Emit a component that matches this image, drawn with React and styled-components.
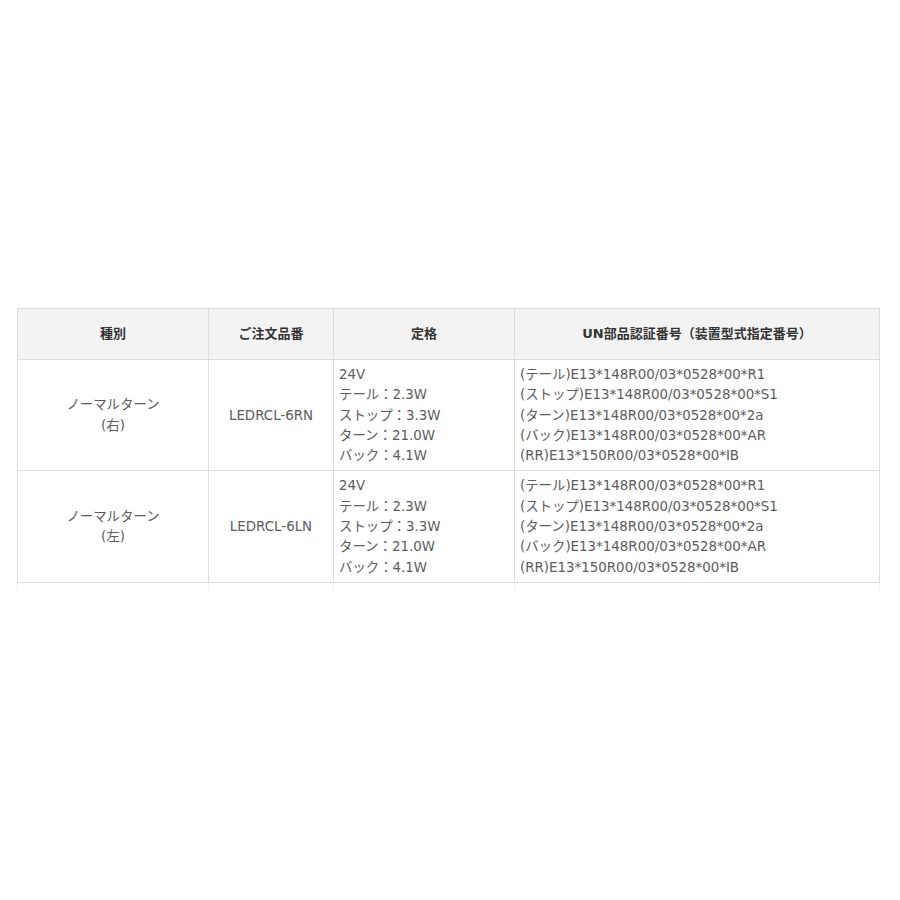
import React from 'react';
import styled, { createGlobalStyle } from 'styled-components';

const Global = createGlobalStyle`
  html, body {
    margin: 0;
    padding: 0;
    background: #fff;
  }
  body {
    font-family: "DejaVu Sans", "Noto Sans CJK JP", sans-serif;
  }
`;

const Page = styled.div`
  width: 900px;
  height: 900px;
  padding: 308px 0 0 17px;
  box-sizing: border-box;
`;

const Table = styled.table`
  width: 862px;
  border-collapse: collapse;
  table-layout: fixed;
  color: #5c5c5c;
  font-size: 13.4px;
  line-height: 20.3px;

  th, td {
    border: 1px solid #ddd;
  }
  thead > tr > th {
    background: #f3f3f3;
    color: #333;
    font-weight: bold;
    font-size: 13px;
    height: 50px;
    padding: 0 5px;
    text-align: center;
  }
  tbody > tr > td {
    padding: 5px 5px 4px;
    vertical-align: middle;
  }
`;

const Col = styled.col`
  width: ${p => p.$w}px;
`;

const Center = styled.td`
  text-align: center;
`;

const Left = styled.td`
  text-align: left;
  white-space: nowrap;
`;

const Tail = styled.tr`
  td {
    height: 7px;
    padding: 0 !important;
    border-top: 1px solid #ddd;
    border-bottom: none;
    border-left: 1px solid #f0f0f0;
    border-right: 1px solid #f0f0f0;
  }
`;

const rows = [
  { kind: 'ノーマルターン', side: '(右)', code: 'LEDRCL-6RN' },
  { kind: 'ノーマルターン', side: '(左)', code: 'LEDRCL-6LN' },
];

const rating = ['24V', 'テール：2.3W', 'ストップ：3.3W', 'ターン：21.0W', 'バック：4.1W'];
const approvals = [
  '(テール)E13*148R00/03*0528*00*R1',
  '(ストップ)E13*148R00/03*0528*00*S1',
  '(ターン)E13*148R00/03*0528*00*2a',
  '(バック)E13*148R00/03*0528*00*AR',
  '(RR)E13*150R00/03*0528*00*IB',
];

const Lines = ({ items }) => items.map((s, i) => (
  <React.Fragment key={i}>{s}{i < items.length - 1 && <br />}</React.Fragment>
));

export default function App() {
  return (
    <Page>
      <Global />
      <Table>
        <colgroup>
          <Col $w={191} />
          <Col $w={125} />
          <Col $w={181} />
          <Col $w={365} />
        </colgroup>
        <thead>
          <tr>
            <th>種別</th>
            <th>ご注文品番</th>
            <th>定格</th>
            <th>UN部品認証番号（装置型式指定番号）</th>
          </tr>
        </thead>
        <tbody>
          {rows.map((r, i) => (
            <tr key={`row${i}`}>
              <Center>{r.kind}<br />{r.side}</Center>
              <Center>{r.code}</Center>
              <Left><Lines items={rating} /></Left>
              <Left><Lines items={approvals} /></Left>
            </tr>
          ))}
          <Tail>
            <td></td><td></td><td></td><td></td>
          </Tail>
        </tbody>
      </Table>
    </Page>
  );
}
